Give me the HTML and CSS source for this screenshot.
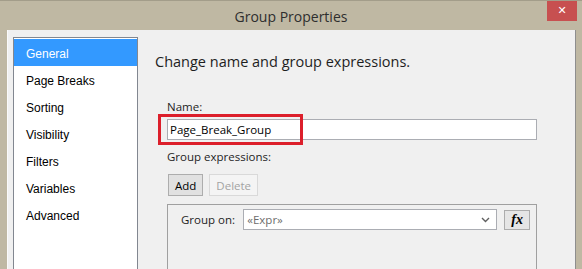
FILE: index.html
```html
<!DOCTYPE html>
<html lang="en">
<head>
  <meta charset="UTF-8">
  <meta name="viewport" content="width=device-width, initial-scale=1.0">
  <title>Group Properties</title>
  <link rel="stylesheet" href="styles.css">
</head>
<body>
  <div class="titlebar">
    <span></span>
    <span class="title">Group Properties</span>
    <button class="close" type="button">&#x2715;</button>
  </div>

  <div class="dialog">
    <ul class="nav">
      <li class="active">General</li>
      <li>Page Breaks</li>
      <li>Sorting</li>
      <li>Visibility</li>
      <li>Filters</li>
      <li>Variables</li>
      <li>Advanced</li>
    </ul>

    <div class="page">
      <h1>Change name and group expressions.</h1>

      <div class="form">
        <label for="groupName">Name:</label>
        <div class="name-field">
          <input type="text" id="groupName" value="Page_Break_Group">
          <span class="highlight"></span>
        </div>

        <p class="caption">Group expressions:</p>
        <div class="buttons">
          <button class="btn" type="button">Add</button>
          <button class="btn" type="button" disabled>Delete</button>
        </div>

        <div class="groupbox">
          <div class="group-row">
            <span class="group-label">Group on:</span>
            <div class="combo">
              <span class="combo-text">&laquo;Expr&raquo;</span>
              <svg class="chevron" width="9" height="6" viewBox="0 0 9 6">
                <path d="M1 1 L4.5 4.5 L8 1" fill="none" stroke="#606060" stroke-width="1.4"/>
              </svg>
            </div>
            <button class="fx" type="button"><i>f</i><i>x</i></button>
          </div>
        </div>
      </div>
    </div>
  </div>
</body>
</html>
```

FILE: styles.css
```css
body {
  margin: 0;
  height: 269px;
  overflow: hidden;
  background-color: #bfb8a3;
  border-top: 1px solid #a39d8a;
  box-sizing: border-box;
  font-family: 'Open Sans', 'Noto Sans', sans-serif;
  color: #1e1e1e;
}

.titlebar {
  height: 29px;
  display: grid;
  grid-template-columns: 1fr auto 1fr;
  align-items: start;
}

.title {
  font-size: 14px;
  color: #2e2e2e;
  line-height: 20px;
  padding-top: 6px;
}

.close {
  justify-self: end;
  width: 30px;
  height: 20px;
  margin: 0 5px 0 0;
  padding: 0;
  border: none;
  background-color: #c75050;
  color: #fff;
  font-size: 11px;
  font-weight: bold;
  line-height: 20px;
  font-family: 'DejaVu Sans', sans-serif;
}

.dialog {
  display: flex;
  margin: 0 6px 0 7px;
  height: 239px;
  overflow: hidden;
  background-color: #f0f0f0;
  border-left: 1px solid #fafafa;
  border-right: 1px solid #8e8e8e;
  padding: 7px 0 0 5px;
  box-sizing: border-box;
}

.nav {
  list-style: none;
  margin: 0;
  padding: 1px 0 0;
  width: 125px;
  box-sizing: border-box;
  background-color: #fff;
  border: 1px solid #828790;
  border-bottom: none;
  font-family: 'Liberation Sans', Arial, sans-serif;
  font-size: 12px;
}

.nav li {
  height: 27px;
  line-height: 30px;
  padding-left: 12px;
  color: #000;
}

.nav li.active {
  background-color: #3399ff;
  color: #fff;
}

.page {
  flex: 1;
  padding: 0 0 0 17px;
}

h1 {
  margin: 15px 0 0;
  font-size: 14.5px;
  font-weight: normal;
  line-height: 20px;
  color: #1e1e1e;
}

.form {
  padding: 27px 0 0 12px;
  width: 370px;
  font-size: 11.5px;
}

.form label,
.caption {
  display: block;
  margin: 0;
  line-height: 16px;
}

.name-field {
  position: relative;
  margin-top: 4px;
}

.name-field input {
  display: block;
  width: 100%;
  height: 21px;
  box-sizing: border-box;
  margin: 0;
  padding: 0 2px;
  border: 1px solid #abadb3;
  font-family: inherit;
  font-size: 11.5px;
  color: #000;
}

.highlight {
  position: absolute;
  left: -9px;
  top: -5px;
  width: 145px;
  height: 31px;
  box-sizing: border-box;
  border: 3px solid #dc1f2b;
}

.caption {
  margin-top: 9px;
}

.buttons {
  display: flex;
  gap: 6px;
  margin-top: 9px;
  padding-left: 1px;
}

.btn {
  height: 22px;
  padding: 0 6px;
  margin: 0;
  border: 1px solid #adadad;
  background-color: #e1e1e1;
  font-family: inherit;
  font-size: 11.5px;
  color: #000;
}

.btn:disabled {
  border-color: #d9d9d9;
  background-color: #f4f4f4;
  color: #a3a3a3;
}

.groupbox {
  margin-top: 8px;
  height: 70px;
  border: 1px solid #a0a0a0;
  border-bottom: none;
  padding: 4px 6px 0 13px;
}

.group-row {
  display: flex;
  align-items: center;
}

.group-label {
  width: 63px;
}

.combo {
  display: flex;
  align-items: center;
  justify-content: space-between;
  width: 257px;
  height: 21px;
  box-sizing: border-box;
  border: 1px solid #abadb3;
  background-color: #fff;
  padding: 0 6px 0 3px;
}

.combo-text {
  color: #6d6d6d;
}

.fx {
  margin-left: 7px;
  width: 26px;
  height: 20px;
  padding: 0;
  border: 1px solid #acacac;
  background-color: #e5e5e5;
  font-family: 'Liberation Serif', serif;
  font-weight: bold;
  font-size: 14px;
  color: #000;
  line-height: 16px;
}
```
